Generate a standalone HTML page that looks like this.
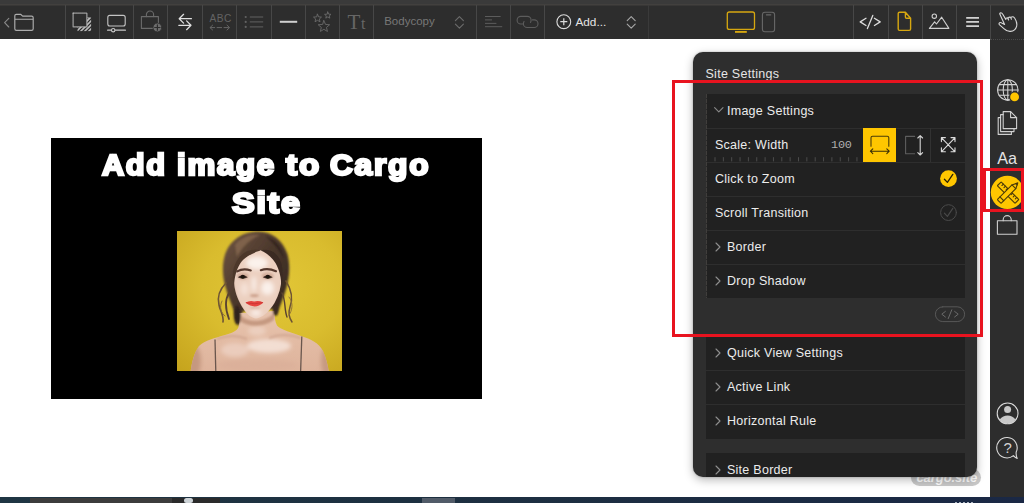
<!DOCTYPE html>
<html><head><meta charset="utf-8">
<style>
*{margin:0;padding:0;box-sizing:border-box}
html,body{width:1024px;height:503px;overflow:hidden;background:#fff;font-family:"Liberation Sans",sans-serif}
.abs{position:absolute}
#top{left:0;top:0;width:1024px;height:5.5px;background:linear-gradient(#3a3a3a 0,#3a3a3a 3.8px,#42403e 4.2px,#42403e 5px,#383736 5.5px)}
#tb{left:0;top:5.5px;width:1024px;height:33.3px;background:#2d2d2d}
.dv{position:absolute;top:5px;width:1px;height:34px;background:#474747}
#side{left:990px;top:39px;width:34px;height:458px;background:#2d2d2d}
#bot{left:0;top:497.3px;width:1024px;height:6px;background:linear-gradient(90deg,#1f3543 0,#1d3040 40%,#1a2845 100%)}
#black{left:51px;top:138px;width:431px;height:261px;background:#000}
.ttl{position:absolute;color:#fff;font-weight:bold;font-size:28.6px;line-height:30px;white-space:nowrap;-webkit-text-stroke:2.4px #fff;paint-order:stroke fill;letter-spacing:1.6px;transform-origin:0 0}
#panel{left:692.8px;top:51.6px;width:284.4px;height:425px;background:#2e2e2e;border-radius:10px;box-shadow:0 3px 10px rgba(0,0,0,.28),0 0 2px rgba(0,0,0,.3);overflow:hidden}
.row{position:absolute;left:13.3px;width:258.7px;letter-spacing:0.27px;height:34px;background:#212121;color:#ececec;font-size:12.5px;line-height:34px;white-space:nowrap}
.row span{position:absolute;top:0}
.sep{position:absolute;left:13.3px;width:258.7px;height:1px;background:#2e2e2e}
.tx{position:absolute;white-space:nowrap}
</style></head><body>
<div class="abs" id="top"></div>
<div class="abs" id="tb"></div>
<div class="abs" id="side"></div>
<div class="abs" id="bot"></div>
<div class="abs" style="left:30px;top:497.5px;width:190px;height:6px;background:#3c3c3c"></div>
<div class="abs" style="left:172px;top:497.5px;width:48px;height:6px;background:#2a2a2a"></div>
<div class="abs" style="left:184px;top:498px;width:9px;height:5px;border-radius:3px;background:#dfe6ea;opacity:.9"></div>
<div class="abs" style="left:422px;top:497.8px;width:33px;height:6px;background:#5b6370;opacity:.85"></div>
<div class="abs" style="left:955px;top:501.6px;width:18px;height:2px;background:repeating-linear-gradient(90deg,#cfd6e0 0,#cfd6e0 2px,transparent 2px,transparent 4px);opacity:.8"></div>


<!-- toolbar dividers -->
<div class="dv" style="left:64.5px"></div><div class="dv" style="left:98.5px"></div><div class="dv" style="left:132.5px"></div><div class="dv" style="left:166.5px"></div><div class="dv" style="left:201.5px"></div><div class="dv" style="left:235.5px"></div><div class="dv" style="left:270.5px"></div><div class="dv" style="left:304.5px"></div><div class="dv" style="left:338.5px"></div><div class="dv" style="left:372.5px"></div><div class="dv" style="left:475.5px"></div><div class="dv" style="left:509.5px"></div><div class="dv" style="left:543.5px"></div><div class="dv" style="left:852.5px"></div><div class="dv" style="left:887.5px"></div><div class="dv" style="left:921.5px"></div><div class="dv" style="left:955.5px"></div><div class="dv" style="left:989.5px"></div><div class="dv" style="left:647.5px;background:#3a3a3a"></div>

<svg class="abs" style="left:0;top:0" width="1024" height="39" viewBox="0 0 1024 39" fill="none" stroke-linecap="round" stroke-linejoin="round">
<!-- back chevron + folder -->
<path d="M8.8 18.3 L4.6 22.6 L8.8 27" stroke="#8a8a8a" stroke-width="1.1"/>
<path d="M14.8 17.2 V15.8 Q14.8 14.3 16.3 14.3 H20.6 L22.6 16.1 H31.6 Q33.2 16.1 33.2 17.7 V28.7 Q33.2 30.3 31.6 30.3 H16.4 Q14.8 30.3 14.8 28.7 Z M14.8 19.2 H33.2" stroke="#adadad" stroke-width="1.15"/>
<!-- layers icon -->
<rect x="77.5" y="17.5" width="13.6" height="13.6" fill="#bdbdbd" stroke="none"/>
<g stroke="#2d2d2d" stroke-width="1.1" stroke-linecap="butt"><path d="M76 26 L84 18 M76 30 L88 18 M78 32 L92 18 M82 32 L92 22 M86 32 L92 26 M90 32 L92 30"/></g>
<rect x="73.1" y="13.1" width="13.8" height="13.8" fill="#2d2d2d" stroke="#bcbcbc" stroke-width="0.95" stroke-dasharray="1.4 0.6"/>
<!-- monitor w/ slider -->
<rect x="107.8" y="15.4" width="17.4" height="10.6" rx="2" stroke="#c4c4c4" stroke-width="1.1"/>
<path d="M107.6 30.2 H125.4" stroke="#c9c9c9" stroke-width="1.2"/>
<circle cx="113.2" cy="30.2" r="1.7" fill="#2d2d2d" stroke="#c9c9c9" stroke-width="1.1"/>
<!-- bag plus (dim) -->
<path d="M141.4 16.6 H158.4 V28.4 H141.4 Z" stroke="#6a6a6a" stroke-width="1.1"/>
<path d="M146.4 16.6 V14.6 A3.6 3.6 0 0 1 153.6 14.6 V16.6" stroke="#6a6a6a" stroke-width="1.1"/>
<circle cx="157.4" cy="27.5" r="4.4" fill="#6d6d6d" stroke="#2d2d2d" stroke-width="0.8"/>
<path d="M157.4 24.8 V30.2 M154.7 27.5 H160.1" stroke="#2d2d2d" stroke-width="1.2"/>
<!-- swap arrows -->
<path d="M191.4 18.7 H179.2 M183.6 14.3 L179.2 18.7 L183.6 23.1" stroke="#e0e0e0" stroke-width="1.25"/>
<path d="M178.8 25.3 H191 M186.6 20.9 L191 25.3 L186.6 29.7" stroke="#e0e0e0" stroke-width="1.25"/>
<!-- ABC arrows dim -->
<path d="M210.2 27.6 H229.4" stroke="#666" stroke-width="1" stroke-dasharray="4.5 2.4" stroke-dashoffset="0"/>
<path d="M212.6 25.2 L210 27.6 L212.6 30 M227 25.2 L229.6 27.6 L227 30" stroke="#666" stroke-width="1"/>
<!-- list dim -->
<g stroke="#626262" stroke-width="1"><path d="M250.2 17 H262.8 M250.2 21.9 H262.8 M250.2 26.9 H262.8"/></g>
<g fill="#626262"><circle cx="245.7" cy="17" r="1.1"/><circle cx="245.7" cy="21.9" r="1.1"/><circle cx="245.7" cy="26.9" r="1.1"/></g>
<!-- hr line -->
<path d="M279.8 21.8 H297.2" stroke="#d0d0d0" stroke-width="2" stroke-linecap="butt"/>
<!-- stars dim -->
<g stroke="#6a6a6a" stroke-width="0.9"><polygon points="317.50,14.20 318.61,16.87 321.49,17.10 319.30,18.98 319.97,21.80 317.50,20.29 315.03,21.80 315.70,18.98 313.51,17.10 316.39,16.87"/><polygon points="327.80,12.00 328.70,14.16 331.03,14.35 329.26,15.87 329.80,18.15 327.80,16.93 325.80,18.15 326.34,15.87 324.57,14.35 326.90,14.16"/><polygon points="323.90,20.60 325.49,24.42 329.61,24.75 326.47,27.43 327.43,31.45 323.90,29.30 320.37,31.45 321.33,27.43 318.19,24.75 322.31,24.42"/></g>
<!-- select chevrons -->
<path d="M455.4 20.6 L459.4 16.6 L463.4 20.6 M455.4 24.2 L459.4 28.2 L463.4 24.2" stroke="#6c6c6c" stroke-width="1.1"/>
<!-- align dim -->
<path d="M485.4 16.5 H500.2 M485.4 19.9 H491.6 M485.4 23.4 H496 M485.4 26.7 H501.8" stroke="#5c5c5c" stroke-width="1"/>
<!-- link dim -->
<path d="M523 24 H520.9 A3.8 3.8 0 0 1 520.9 16.4 H527.3 A3.8 3.8 0 0 1 531.1 20.2 Q531.1 21.4 530.5 22.4" stroke="#5c5c5c" stroke-width="1.1"/>
<path d="M532.4 19.9 H534.2 A3.8 3.8 0 0 1 534.2 27.5 H527.2 A3.8 3.8 0 0 1 523.4 23.7 Q523.4 22.5 524 21.5" stroke="#5c5c5c" stroke-width="1.1"/>
<!-- add plus -->
<circle cx="563.8" cy="21.7" r="6.9" stroke="#dcdcdc" stroke-width="1.1"/>
<path d="M563.8 18.2 V25.2 M560.3 21.7 H567.3" stroke="#dcdcdc" stroke-width="1.2" stroke-linecap="butt"/>
<path d="M627.2 20.6 L631.2 16.6 L635.2 20.6 M627.2 24.2 L631.2 28.2 L635.2 24.2" stroke="#a8a8a8" stroke-width="1.1"/>
<!-- monitor yellow -->
<rect x="727.3" y="12" width="27.2" height="17.4" rx="2" stroke="#d6a710" stroke-width="1.3"/>
<path d="M735 31.9 H746.8" stroke="#d6a710" stroke-width="1.9" stroke-linecap="butt"/>
<!-- phone dim -->
<rect x="762.4" y="12.3" width="12.2" height="19.4" rx="2.4" stroke="#686868" stroke-width="1.1"/>
<path d="M766.4 14.8 H770.8" stroke="#686868" stroke-width="1.2"/>
<!-- code -->
<path d="M866 18.3 L860.2 21.9 L866 25.5 M874.4 18.3 L880.2 21.9 L874.4 25.5 M872.8 15.4 L867.4 28.6" stroke="#dedede" stroke-width="1.3"/>
<!-- page yellow -->
<path d="M898.2 13.6 Q898.2 12.2 899.6 12.2 H905.4 L910.6 18.2 V29 Q910.6 30.4 909.2 30.4 H899.6 Q898.2 30.4 898.2 29 Z M905.4 12.2 V17 Q905.4 18.2 906.6 18.2 H910.6" stroke="#d6a710" stroke-width="1.4"/>
<!-- image icon -->
<circle cx="934.3" cy="16.2" r="2.2" stroke="#cfcfcf" stroke-width="1.1"/>
<path d="M929.4 28.4 L934.6 21.8 L936.5 24 L941.7 17.2 L948.9 28.4 Z" stroke="#cfcfcf" stroke-width="1.1"/>
<!-- hamburger -->
<path d="M966.2 17.8 H979 M966.2 21.8 H979 M966.2 26.1 H979" stroke="#d2d2d2" stroke-width="1.7" stroke-linecap="butt"/>
<!-- hand -->
<path d="M1004.6 24.4 L1000 14.6 Q999.3 12.9 1000.9 12.8 Q1002 12.8 1002.6 14 L1005.8 19.4 M1005.8 19.4 Q1006 17.6 1007.6 17.9 L1008.6 20 M1008.2 18.1 Q1009.2 16.6 1010.6 17.3 L1011.4 19.2 M1011 17.3 Q1013 16 1014.6 18 Q1017.6 22.4 1016.6 26.4 Q1015.4 31 1010.4 31.4 Q1007 31.6 1004.2 28.8 L999.6 24.9 Q998.4 23.5 999.6 22.7 Q1000.8 22.2 1002.2 23.2 L1004.6 24.4" stroke="#d8d8d8" stroke-width="1.1"/>
</svg>
<div class="tx" style="left:209.6px;top:13px;font-size:10.2px;line-height:11px;color:#646464;letter-spacing:0.35px">ABC</div>
<div class="tx" style="left:347.6px;top:9.9px;font-family:'Liberation Serif',serif;font-size:21px;line-height:24px;color:#666">T</div>
<div class="tx" style="left:361px;top:13.8px;font-family:'Liberation Serif',serif;font-size:16px;line-height:20px;color:#666">t</div>
<div class="tx" id="bodycopy" style="left:384.2px;top:14.4px;font-size:11.5px;line-height:14px;color:#777">Bodycopy</div>
<div class="tx" id="addtx" style="left:575.4px;top:15.2px;font-size:11.8px;line-height:14px;color:#e4e4e4">Add...</div>


<!-- main black image -->
<div class="abs" id="black"></div>
<div class="ttl" id="w1" style="left:102.27px;top:150px;transform:scaleX(1.071)">Add</div>
<div class="ttl" id="w2" style="left:176.51px;top:150px;transform:scaleX(1.092)">image</div>
<div class="ttl" id="w3" style="left:286.16px;top:150px;transform:scaleX(1.160)">to</div>
<div class="ttl" id="w4" style="left:330.30px;top:150px;transform:scaleX(1.106)">Cargo</div>
<div class="ttl" id="w5" style="left:232.40px;top:188px;transform:scaleX(1.184)">Site</div>

<svg class="abs" style="left:177px;top:231px" width="165" height="140" viewBox="0 0 165 140">
<defs>
<radialGradient id="bg" cx="0.58" cy="0.40" r="0.85"><stop offset="0" stop-color="#e2c737"/><stop offset="0.5" stop-color="#d9bc2e"/><stop offset="1" stop-color="#c4a21c"/></radialGradient>
<filter id="b1" x="-10%" y="-10%" width="120%" height="120%"><feGaussianBlur stdDeviation="0.9"/></filter>
<filter id="b2" x="-10%" y="-10%" width="120%" height="120%"><feGaussianBlur stdDeviation="0.5"/></filter>
<filter id="b3" x="-30%" y="-30%" width="160%" height="160%"><feGaussianBlur stdDeviation="2.2"/></filter>
<filter id="b4" x="-30%" y="-30%" width="160%" height="160%"><feGaussianBlur stdDeviation="1.3"/></filter>
<linearGradient id="skin" x1="0" y1="0" x2="0" y2="1"><stop offset="0" stop-color="#e7c3ad"/><stop offset="1" stop-color="#deb39b"/></linearGradient>
<linearGradient id="hairg" x1="0" y1="0" x2="1" y2="1"><stop offset="0" stop-color="#705643"/><stop offset="0.45" stop-color="#4c382c"/><stop offset="1" stop-color="#2f231d"/></linearGradient>
<path id="bodyp" d="M13.5 142 C14.5 132 17 122 22 115 C28 109 38 107 48 104 C55 102 60 100 61.5 96 C62.5 92 62.5 88 62 82 L97.5 80 C97.5 86 98 91 100 94.5 C103 98 110 100 124 105 C134 108 142 112 146 120 C149 127 151 134 152 142 Z"/>
<path id="facep" d="M83.5 19 C70 19 57.5 28 56.8 44 C56.4 54 58.6 64 63 72 C67 80 73 87.4 79 87.4 C85 87.4 92.5 80 97.5 72 C102.4 63 104.8 54 104.4 44 C103.6 28 96 19 83.5 19 Z"/>
<clipPath id="pc"><rect x="0" y="0" width="165" height="140"/></clipPath>
<clipPath id="bodyc"><use href="#bodyp"/></clipPath>
<clipPath id="facec"><use href="#facep"/></clipPath>
</defs>
<rect width="165" height="140" fill="url(#bg)"/>
<g clip-path="url(#pc)">
<!-- hair back mass -->
<g filter="url(#b1)">
<path d="M81 0.6 C66 0.6 53.5 9 48.5 22 C44.5 33 45.5 46 48.5 56 C50.5 64 54 72 57 80 C58 86 59 92 62 95 L66 80 L96 78 L99 85 C102 78 106 68 109 58 C112.6 46 113.4 34 110.4 23 C105.4 9 95 0.6 81 0.6 Z" fill="url(#hairg)"/>
<path d="M58 14 C64 6 74 3 83 4 C74 8 66 14 60 26 Z" fill="#8a6b52" opacity="0.75"/>
<path d="M88 5 C98 8 105 16 107 28 C102 18 96 11 88 5 Z" fill="#241a15" opacity="0.7"/>
</g>
<!-- loose curls -->
<g filter="url(#b2)" fill="none" stroke-linecap="round">
<path d="M49 52 C43 58 40 66 42 74 C43 80 47 84 46 91" stroke="#6e5434" stroke-width="1.6"/>
<path d="M52 62 C47 70 49 80 52 88" stroke="#5a4330" stroke-width="1.8"/>
<path d="M45 70 C42 76 44 82 48 85" stroke="#8a6c38" stroke-width="0.9"/>
<path d="M109 50 C114 58 116 68 113 76 C111 82 113 88 115 91" stroke="#6e5434" stroke-width="1.5"/>
<path d="M105 62 C109 70 107 78 110 86" stroke="#5a4330" stroke-width="1.4"/>
<path d="M112 66 C117 72 115 80 112 84" stroke="#8a6c38" stroke-width="0.9"/>
</g>
<!-- body -->
<g filter="url(#b2)"><use href="#bodyp" fill="url(#skin)"/></g>
<g clip-path="url(#bodyc)">
<g filter="url(#b3)">
<ellipse cx="17" cy="130" rx="7" ry="16" fill="#c2957d" opacity="0.9"/>
<ellipse cx="150" cy="130" rx="6" ry="16" fill="#c2957d" opacity="0.85"/>
<ellipse cx="92" cy="115" rx="22" ry="7" fill="#f6e4da" opacity="0.85"/>
<ellipse cx="58" cy="119" rx="14" ry="7" fill="#eed3c5" opacity="0.75"/>
<ellipse cx="80" cy="100" rx="9" ry="5" fill="#efd5c8" opacity="0.7"/>
<ellipse cx="80" cy="134" rx="40" ry="6" fill="#d9ae97" opacity="0.6"/>
</g>
<g filter="url(#b4)">
<path d="M63 84 C71 92 88 92 97 82 L97.5 88 C90 96 72 97 62.5 90 Z" fill="#bd8f77" opacity="0.8"/>
<path d="M40 108 C52 104 60 104 70 108" stroke="#cda38d" stroke-width="2" fill="none" opacity="0.8"/>
<path d="M92 107 C102 103 112 103 124 107" stroke="#cda38d" stroke-width="2" fill="none" opacity="0.8"/>
</g>
</g>
<!-- dark hair behind neck -->
<g filter="url(#b4)">
<ellipse cx="60.2" cy="84" rx="3.2" ry="9.5" fill="#2f221c"/>
<ellipse cx="98.6" cy="79" rx="2.4" ry="5.6" fill="#3a2a22"/>
</g>
<!-- face -->
<g filter="url(#b2)"><use href="#facep" fill="#ecd0c0"/></g>
<g clip-path="url(#facec)">
<g filter="url(#b4)">
<path d="M56 44 C56 58 60 70 67 80 L60 80 L54 46 Z" fill="#b98e78" opacity="0.75"/>
<path d="M105 44 C105 58 101 70 94 80 L102 78 L107 46 Z" fill="#c59c87" opacity="0.6"/>
<ellipse cx="65.8" cy="45" rx="6" ry="3.4" fill="#c9a08c" opacity="0.7"/>
<ellipse cx="90.8" cy="45" rx="6" ry="3.4" fill="#c9a08c" opacity="0.7"/>
<ellipse cx="77.4" cy="64.6" rx="4.4" ry="1.6" fill="#c4967f" opacity="0.8"/>
<ellipse cx="78" cy="77" rx="5" ry="1.3" fill="#cfa590" opacity="0.7"/>
</g>
<g filter="url(#b3)">
<ellipse cx="80" cy="32" rx="11" ry="6.5" fill="#fcf3ee" opacity="0.95"/>
<ellipse cx="90.5" cy="57" rx="6.5" ry="7" fill="#fcf3ee" opacity="0.9"/>
<ellipse cx="67.5" cy="58" rx="4" ry="6.5" fill="#f7e6dc" opacity="0.75"/>
<ellipse cx="79" cy="82" rx="5.5" ry="3.2" fill="#fbf0ea" opacity="0.9"/>
<ellipse cx="77" cy="53" rx="2.2" ry="8" fill="#fcf3ee" opacity="0.85"/>
</g>
</g>
<g filter="url(#b2)">
<!-- hair front -->
<path d="M83.7 19.2 C72 16.5 59.5 23 56 40 C55.4 46 55.8 51 57 55 C57.4 47 59 39 63.5 32 C68.5 25 77 21.4 83.7 19.6 Z" fill="#4d392c"/>
<path d="M83.7 19.2 C95 16.5 104.6 24 105.6 40 C106 46 105.6 51 104.4 55 C104.2 47 102.6 39 98.5 32 C94.5 25.6 89 21.6 83.7 19.6 Z" fill="#3a2a22"/>
<!-- brows -->
<path d="M60.2 40.4 Q66 37 73.8 39.4" stroke="#54392e" stroke-width="2.1" fill="none" stroke-linecap="round"/>
<path d="M83.8 39.2 Q91 36.6 99 40.2" stroke="#54392e" stroke-width="2.1" fill="none" stroke-linecap="round"/>
<!-- eyes -->
<path d="M60.8 46.2 Q65.8 42.4 70.8 46.2 Q65.8 48.8 60.8 46.2 Z" fill="#3c2a24"/>
<path d="M85.8 46.2 Q90.8 42.4 95.8 46.2 Q90.8 48.8 85.8 46.2 Z" fill="#3c2a24"/>
<ellipse cx="65.8" cy="45.8" rx="2.1" ry="2" fill="#1a1210"/>
<ellipse cx="90.8" cy="45.8" rx="2.1" ry="2" fill="#1a1210"/>
<!-- lips -->
<path d="M68.4 71.6 Q73.4 69 77.2 70.6 Q81 69 86.4 71.4 Q78 79.4 68.4 71.6 Z" fill="#e6443f"/>
<path d="M69 71.8 Q77.4 73.8 86 71.6" stroke="#c02e2e" stroke-width="0.6" fill="none"/>
<!-- straps -->
<path d="M38 108.4 L38.8 141" stroke="#6a574e" stroke-width="1.3" fill="none"/>
<path d="M124.8 105.4 L123.6 141" stroke="#6a574e" stroke-width="1.3" fill="none"/>
</g>
</g>
</svg>



<!-- watermark -->
<div class="abs" style="left:911.4px;top:468.6px;width:69.6px;height:17.4px;border-radius:8.7px;background:#c9c9c9"></div>
<div class="tx" style="left:916.4px;top:470.4px;font-size:13px;line-height:16px;font-weight:bold;font-style:italic;color:#fff;letter-spacing:-0.05px">cargo.site</div>
<!-- panel -->
<div class="abs" id="panel"><div class="abs" style="left:0.2px;top:0.5px;width:284px;height:425px">
<div class="tx" style="left:12.5px;top:13.5px;font-size:12.5px;line-height:16px;color:#e6e6e6;letter-spacing:0.27px">Site Settings</div>
<!-- block 1 -->
<div class="row" style="top:41.5px;height:34.5px"><span style="left:20.7px">Image Settings</span></div>
<div class="row" style="top:76px"><span style="left:8.7px">Scale: Width</span><span style="left:124.8px;top:0.3px;font-family:'Liberation Mono',monospace;font-size:11.8px;letter-spacing:-0.2px;color:#b0b0b0">100</span></div>
<div class="row" style="top:110px"><span style="left:8.7px">Click to Zoom</span></div>
<div class="row" style="top:144px"><span style="left:8.7px">Scroll Transition</span></div>
<div class="row" style="top:178px"><span style="left:20.7px">Border</span></div>
<div class="row" style="top:212px"><span style="left:20.7px">Drop Shadow</span></div>
<div class="sep" style="top:75.5px"></div><div class="sep" style="top:109.5px"></div><div class="sep" style="top:143.5px"></div><div class="sep" style="top:177.5px"></div><div class="sep" style="top:211.5px"></div>
<div class="abs" style="left:13.1px;top:41.5px;width:1.3px;height:204.5px;background:repeating-linear-gradient(#403e3c 0,#403e3c 4.2px,#2a2a2a 4.2px,#2a2a2a 5.2px)"></div>
<!-- scale buttons -->
<div class="abs" style="left:170px;top:76px;width:33.4px;height:33.6px;background:#ffc600"></div>
<div class="abs" style="left:237.5px;top:76px;width:1px;height:33.5px;background:#323232"></div>
<!-- block 2 -->
<div class="row" style="top:284px"><span style="left:20.7px">Quick View Settings</span></div>
<div class="row" style="top:318px"><span style="left:20.7px">Active Link</span></div>
<div class="row" style="top:352px;height:34.5px"><span style="left:20.7px">Horizontal Rule</span></div>
<div class="sep" style="top:317.5px"></div><div class="sep" style="top:351.5px"></div>
<!-- block 3 -->
<div class="row" style="top:401px"><span style="left:20.7px">Site Border</span></div>
<svg class="abs" style="left:0;top:0" width="284" height="424" viewBox="0 0 284 424" fill="none" stroke-linecap="round" stroke-linejoin="round">
<!-- chevrons -->
<path d="M21.6 55.6 L25.8 59.8 L30 55.6" stroke="#8a8a8a" stroke-width="1.1"/>
<g stroke="#8e8e8e" stroke-width="1.1">
<path d="M23 191 L27 195 L23 199"/><path d="M23 225 L27 229 L23 233"/>
<path d="M23 297 L27 301 L23 305"/><path d="M23 331 L27 335 L23 339"/><path d="M23 365 L27 369 L23 373"/><path d="M23 414 L27 418 L23 422"/>
</g>
<!-- ticks -->
<g stroke="#4c4c4c" stroke-width="1" stroke-linecap="butt" ><path d="M22.00 105.2 V109.4"/><path d="M30.35 105.2 V109.4"/><path d="M38.70 105.2 V109.4"/><path d="M47.05 105.2 V109.4"/><path d="M55.40 105.2 V109.4"/><path d="M63.75 105.2 V109.4"/><path d="M72.10 105.2 V109.4"/><path d="M80.45 105.2 V109.4"/><path d="M88.80 105.2 V109.4"/><path d="M97.15 105.2 V109.4"/><path d="M105.50 105.2 V109.4"/><path d="M113.85 105.2 V109.4"/><path d="M122.20 105.2 V109.4"/><path d="M130.55 105.2 V109.4"/><path d="M138.90 105.2 V109.4"/><path d="M147.25 105.2 V109.4"/><path d="M155.60 105.2 V109.4"/><path d="M163.95 105.2 V109.4"/></g>
<!-- width icon on yellow -->
<path d="M178 94.2 V85.8 Q178 84.2 179.6 84.2 H194.2 Q195.8 84.2 195.8 85.8 V94.2" stroke="#4a3c08" stroke-width="1.1"/>
<path d="M177.4 99.2 H196.2 M179.8 96.8 L177.4 99.2 L179.8 101.6 M193.8 96.8 L196.2 99.2 L193.8 101.6" stroke="#3a2f06" stroke-width="1.1"/>
<!-- height icon -->
<path d="M221.6 84.4 H212.6 V101.8 H221.6" stroke="#5e5e5e" stroke-width="1.1"/>
<path d="M227.2 83.6 V103 M224.8 86 L227.2 83.6 L229.6 86 M224.8 100.6 L227.2 103 L229.6 100.6" stroke="#d6d6d6" stroke-width="1.1"/>
<!-- expand icon -->
<path d="M248.6 85.8 L261.8 99.6 M261.8 85.8 L248.6 99.6 M248.4 89.6 V85.6 H252.4 M258 85.6 H262 V89.6 M262 95.8 V99.8 H258 M252.4 99.8 H248.4 V95.8" stroke="#dcdcdc" stroke-width="1.1"/>
<!-- check on -->
<circle cx="255.5" cy="126.6" r="8.4" fill="#ffc600"/>
<path d="M251.4 127.2 L254.4 130.4 L259.8 122.4" stroke="#2a2204" stroke-width="1.3"/>
<!-- check off -->
<circle cx="255.5" cy="160.6" r="7.9" stroke="#4a4a4a" stroke-width="1"/>
<path d="M251.4 161.2 L254.4 164.4 L259.8 156.4" stroke="#4a4a4a" stroke-width="1.1"/>
<!-- code pill -->
<rect x="242.4" y="254.8" width="29.2" height="14.8" rx="7.4" stroke="#585858" stroke-width="1"/>
<path d="M252.4 259.4 L248.8 262.2 L252.4 265 M261.6 259.4 L265.2 262.2 L261.6 265 M258.8 257.8 L255.2 266.6" stroke="#6a6a6a" stroke-width="1"/>
</svg></div>
</div>

<div class="abs" style="left:990px;top:38.5px;width:34px;height:0;border-top:1px dotted #4a4a4a"></div>
<div class="tx" style="left:997.2px;top:149px;font-size:16.2px;line-height:18px;color:#e4e4e4">Aa</div>
<svg class="abs" style="left:984px;top:39px" width="40" height="458" viewBox="984 39 40 458" fill="none" stroke-linecap="round" stroke-linejoin="round">
<!-- globe -->
<g stroke="#d4d4d4" stroke-width="1.05">
<circle cx="1007.8" cy="89.9" r="10.2"/>
<ellipse cx="1007.8" cy="89.9" rx="4.6" ry="10.2"/>
<path d="M1007.8 79.7 V100.1 M997.6 89.9 H1018 M999.2 84.6 H1016.4 M999.2 95.2 H1016.4"/>
</g>
<circle cx="1014.6" cy="96.9" r="5.6" fill="#2d2d2d"/>
<circle cx="1014.6" cy="96.9" r="4.4" fill="#ffc600"/>
<!-- pages -->
<g stroke="#d0d0d0" stroke-width="1.1">
<path d="M1003.2 111.6 H1010.6 L1016.6 117.6 V128.6 H1003.2 Z" fill="#2d2d2d"/>
<path d="M1010.6 111.6 V117.6 H1016.6"/>
<path d="M1003.2 114.6 H1000.6 V131.6 H1014 V128.6"/>
<path d="M1000.6 117.6 H998.2 V134.4 H1011.4 V131.6"/>
</g>
<!-- yellow circle tools -->
<circle cx="1007.4" cy="192.4" r="16.6" fill="#ffc600"/>
<g stroke="#4a3a08" stroke-width="1.1">
<g transform="translate(1008.1 192.6) rotate(-45)"><rect x="-2.7" y="-12.5" width="5.4" height="25" rx="0.6"/><path d="M2.7 -9.4 H0.6 M2.7 -6.4 H0.6 M2.7 -3.4 H0.6 M2.7 3.6 H0.6 M2.7 6.6 H0.6 M2.7 9.6 H0.6"/></g>
<g transform="translate(1008.5 192.2) rotate(45)"><path d="M-2.7 -7.6 L0 -13.2 L2.7 -7.6 V12.2 Q2.7 13.2 1.7 13.2 H-1.7 Q-2.7 13.2 -2.7 12.2 Z" fill="#ffc600"/><path d="M-2.7 -7.6 H2.7 M-2.7 9.4 H2.7 M-0.9 -11.3 H0.9"/></g>
</g>
<!-- bag -->
<g stroke="#d0d0d0" stroke-width="1.1">
<path d="M997.4 220.8 H1017 V234.2 H997.4 Z"/>
<path d="M1003.2 220.8 V219.6 A4 4 0 0 1 1011.2 219.6 V220.8"/>
</g>
<!-- user -->
<circle cx="1007.6" cy="413.4" r="10.4" stroke="#dadada" stroke-width="1.1"/>
<circle cx="1007.6" cy="409.6" r="3.5" fill="#c8c8c8"/>
<path d="M999.6 419.4 Q1003 415.6 1007.6 415.6 Q1012.2 415.6 1015.6 419.4 Q1012.4 423.6 1007.6 423.6 Q1002.8 423.6 999.6 419.4 Z" fill="#c8c8c8"/>
<!-- help -->
<path d="M1013.4 455.6 A10.2 10.2 0 1 1 1016.2 452 Q1015.8 455.6 1017.2 458.4 Q1015 457.6 1013.4 455.6 Z" stroke="#dadada" stroke-width="1.1"/>
</svg>
<div class="tx" style="left:1003.4px;top:438.6px;font-size:15px;line-height:17px;color:#d4d4d4">?</div>


<div class="abs" style="left:672px;top:80px;width:311px;height:257px;border:3.4px solid #e8131f"></div>
<div class="abs" style="left:983.4px;top:168.1px;width:40.8px;height:44.4px;border:3.3px solid #e8131f"></div>


</body></html>
